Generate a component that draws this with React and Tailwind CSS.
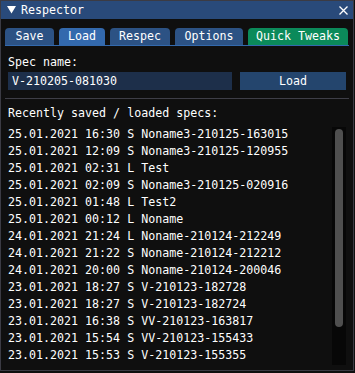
import React from 'react';

const tabs = [
  { label: 'Save', w: 'w-[49px]', bg: 'bg-[#2c5284]' },
  { label: 'Load', w: 'w-[46px]', bg: 'bg-[#3369ad]' },
  { label: 'Respec', w: 'w-[60px]', bg: 'bg-[#2c5284]' },
  { label: 'Options', w: 'w-[68px]', bg: 'bg-[#2c5284]' },
  { label: 'Quick Tweaks', w: 'w-[100px]', bg: 'bg-[#0b8a5a]' },
];

const specs = [
  '25.01.2021 16:30 S Noname3-210125-163015',
  '25.01.2021 12:09 S Noname3-210125-120955',
  '25.01.2021 02:31 L Test',
  '25.01.2021 02:09 S Noname3-210125-020916',
  '25.01.2021 01:48 L Test2',
  '25.01.2021 00:12 L Noname',
  '24.01.2021 21:24 L Noname-210124-212249',
  '24.01.2021 21:22 S Noname-210124-212212',
  '24.01.2021 20:00 S Noname-210124-200046',
  '23.01.2021 18:27 S V-210123-182728',
  '23.01.2021 18:27 S V-210123-182724',
  '23.01.2021 16:38 S VV-210123-163817',
  '23.01.2021 15:54 S VV-210123-155433',
  '23.01.2021 15:53 S V-210123-155355',
];

const App = () => {
  return (
    <div className="w-[355px] h-[373px] bg-[#0f0f0f] overflow-hidden font-['DejaVu_Sans_Mono',monospace] text-[11.65px] leading-[17px] text-white">
      <div className="w-[354px] h-[371px] border border-[#3b3b44] flex flex-col bg-[#0f0f0f]">
        {/* title bar */}
        <div className="h-[18px] bg-[#294a7a] flex items-center pl-[6px] pr-[5px]">
          <svg width="9" height="8" viewBox="0 0 9 8" className="mr-[5px]">
            <polygon points="0,0 9,0 4.5,7.5" fill="#fff" />
          </svg>
          <span className="flex-1">Respector</span>
          <svg width="9" height="9" viewBox="0 0 9 9">
            <path d="M0.5 0.5 L8.5 8.5 M8.5 0.5 L0.5 8.5" stroke="#fff" strokeWidth="1.3" />
          </svg>
        </div>

        <div className="flex flex-col px-[7px] flex-1 min-h-0">
          {/* tab bar */}
          <div className="-mx-[3px] mt-[9px]">
            <div className="flex gap-[5px] pl-[0px]">
              {tabs.map((t) => (
                <div
                  key={t.label}
                  className={`${t.w} ${t.bg} h-[17px] rounded-t-[4px] flex items-center justify-center`}
                >
                  {t.label}
                </div>
              ))}
            </div>
            <div className="h-px bg-[#3369ad]" />
          </div>

          <div className="mt-[8px]">Spec name:</div>

          <div className="flex items-center gap-[8px] mt-[1px]">
            <div className="w-[224px] h-[18px] bg-[#1d2f4a] flex items-center pl-[4px]">
              V-210205-081030
            </div>
            <div className="flex-1 h-[18px] bg-[#24456d] flex items-center justify-center">
              Load
            </div>
          </div>

          <div className="-mx-[3px] h-px bg-[#3e3e47] mt-[8px]" />

          <div className="mt-[6px]">Recently saved / loaded specs:</div>

          <div className="flex flex-1 min-h-0 mt-[4px] mb-[5px]">
            <div className="flex-1 overflow-hidden">
              {specs.map((s, i) => (
                <div key={i} className="whitespace-pre">{s}</div>
              ))}
            </div>
            <div className="w-[14px] bg-[#070707] mt-[1px] flex justify-center pt-[2px]">
              <div className="w-[8px] h-[198px] rounded-[4px] bg-[#4f4f4f]" />
            </div>
          </div>
        </div>
      </div>
    </div>
  );
};

export default App;
